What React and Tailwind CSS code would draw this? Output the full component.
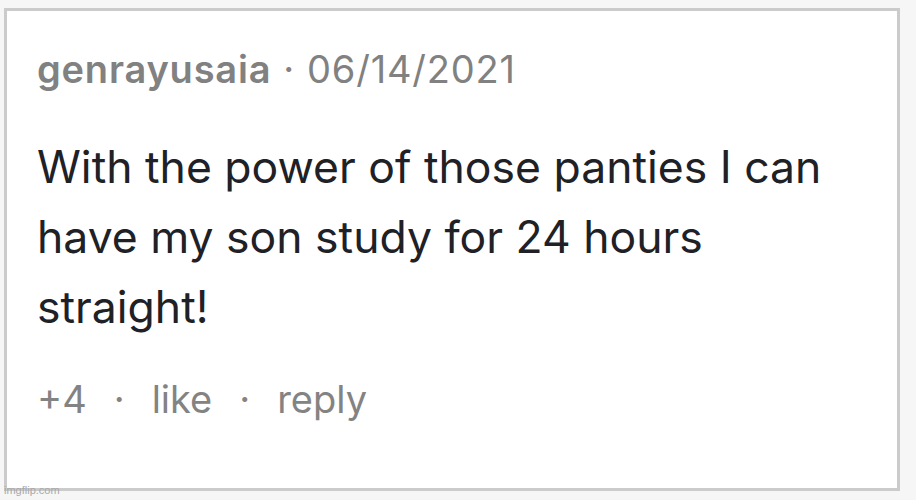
import React from 'react';

const comment = {
  user: 'genrayusaia',
  date: '06/14/2021',
  lines: ['With the power of those panties I can', 'have my son study for 24 hours', 'straight!'],
  score: '+4',
};

const App = () => {
  return (
    <div className="relative w-[916px] h-[500px] bg-[#f6f6f6] overflow-hidden" style={{ fontFamily: 'Inter, "Liberation Sans", sans-serif' }}>
      <div className="absolute left-[4px] top-[8px] w-[896px] h-[483px] bg-white border-[3px] border-[#cbcbcb] pl-[30px] pt-[36px]">
        <div className="flex items-baseline text-[38px] leading-[44px] tracking-[0.8px] text-[#818181]">
          <span className="font-semibold">{comment.user}</span>
          <span className="ml-[12px]">·</span>
          <span className="ml-[12px]">{comment.date}</span>
        </div>
        <div className="mt-[41px] text-[44.5px] leading-[70px] text-[#202126]">
          {comment.lines.map((l) => (
            <div key={l}>{l}</div>
          ))}
        </div>
        <div className="mt-[35px] flex items-baseline text-[38px] leading-[44px] text-[#838383]">
          <span>{comment.score}</span>
          <span className="ml-[27px]">·</span>
          <span className="ml-[27px]">like</span>
          <span className="ml-[27px]">·</span>
          <span className="ml-[27px]">reply</span>
        </div>
      </div>
      <div className="absolute left-[4px] top-[483px] text-[11px] leading-[14px] text-[#a8a8a8]" style={{ fontFamily: '"Liberation Sans", sans-serif' }}>
        imgflip.com
      </div>
    </div>
  );
};

export default App;
